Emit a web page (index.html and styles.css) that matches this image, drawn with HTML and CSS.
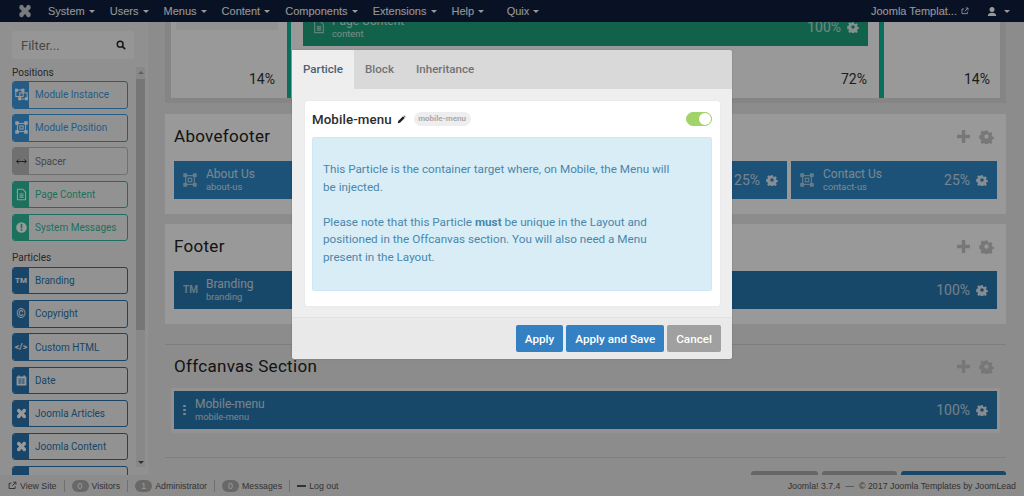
FILE: index.html
```html
<!DOCTYPE html>
<html lang="en">
<head>
    <meta charset="UTF-8">
    <title>Layout Manager</title>
    <link rel="stylesheet" href="styles.css">
</head>
<body>

    <!-- Top menu -->
    <nav class="navbar">
        <svg class="logo" viewBox="0 0 16 16"><use href="#joomla"/></svg>
        <ul class="nav-menu">
            <li>System <i class="caret"></i></li>
            <li>Users <i class="caret"></i></li>
            <li>Menus <i class="caret"></i></li>
            <li>Content <i class="caret"></i></li>
            <li>Components <i class="caret"></i></li>
            <li>Extensions <i class="caret"></i></li>
            <li>Help <i class="caret"></i></li>
            <li class="quix">Quix <i class="caret"></i></li>
        </ul>
        <div class="nav-right">
            <span>Joomla Templat...</span>
            <svg class="ext-icon" viewBox="0 0 12 12"><path d="M9.500 7v3h-8V3h3M7 1.500h3.500V5M10 2L5.500 6.500" fill="none" stroke="currentColor" stroke-width="1.300"/></svg>
            <svg class="user-icon" viewBox="0 0 12 12"><circle cx="6" cy="3.500" r="3" fill="currentColor"/><path d="M1 11.500c0-3 2-4 5-4s5 1 5 4z" fill="currentColor"/></svg>
            <i class="caret"></i>
        </div>
    </nav>

    <div class="page">
        <!-- Sidebar with particle picker -->
        <aside class="sidebar">
            <div class="filter">
                <span>Filter...</span>
                <svg viewBox="0 0 12 12"><circle cx="5" cy="5" r="3.500" fill="none" stroke="#222" stroke-width="1.700"/><path d="M7.500 7.500l3.500 3.500" stroke="#222" stroke-width="2"/></svg>
            </div>
            <div class="picker">
                <div class="picker-list">
                    <h4>Positions</h4>
                    <div class="pick blue"><b><svg viewBox="0 0 16 16"><use href="#instance"/></svg></b><span>Module Instance</span></div>
                    <div class="pick blue"><b><svg viewBox="0 0 16 16"><use href="#module"/></svg></b><span>Module Position</span></div>
                    <div class="pick grey"><b class="arrow"><svg viewBox="0 0 16 16"><path d="M2 8h12M4.500 5.500L2 8l2.500 2.500M11.500 5.500L14 8l-2.500 2.500" fill="none" stroke="currentColor" stroke-width="1.200"/></svg></b><span>Spacer</span></div>
                    <div class="pick green"><b><svg viewBox="0 0 16 16"><use href="#page"/></svg></b><span>Page Content</span></div>
                    <div class="pick green"><b><svg viewBox="0 0 16 16"><circle cx="8" cy="8" r="6.500" fill="#fff"/><rect x="7" y="3.500" width="2" height="5.500" fill="#2ebd9b"/><rect x="7" y="10" width="2" height="2" fill="#2ebd9b"/></svg></b><span>System Messages</span></div>
                    <h4 class="particles">Particles</h4>
                    <div class="pick navy"><b class="tm">TM</b><span>Branding</span></div>
                    <div class="pick navy"><b class="copy">&copy;</b><span>Copyright</span></div>
                    <div class="pick navy"><b class="code">&lt;/&gt;</b><span>Custom HTML</span></div>
                    <div class="pick navy"><b><svg viewBox="0 0 16 16"><path d="M2 3h12v11H2z" fill="#fff"/><path d="M4 1.500h1.500V4H4zM10.500 1.500H12V4h-1.500z" fill="#fff"/><path d="M3.500 6h9M3.500 8.500h9M3.500 11h9M6 6v6.500M10 6v6.500" stroke="#2874ae" stroke-width=".8"/></svg></b><span>Date</span></div>
                    <div class="pick navy"><b class="jm"><svg viewBox="0 0 16 16"><use href="#joomla"/></svg></b><span>Joomla Articles</span></div>
                    <div class="pick navy"><b class="jm"><svg viewBox="0 0 16 16"><use href="#joomla"/></svg></b><span>Joomla Content</span></div>
                    <div class="pick navy"><b></b><span></span></div>
                </div>
                <div class="scrollbar">
                    <i class="up"></i>
                    <div class="thumb"></div>
                    <i class="down"></i>
                </div>
            </div>
        </aside>

        <main class="content">
            <!-- Mainbody row, scrolled under the menu -->
            <section class="main-row">
                <div class="col side-col">
                    <div class="ghost"></div>
                    <span class="size">14%</span>
                </div>
                <div class="col mid-col">
                    <div class="block green-block">
                        <svg class="block-icon" viewBox="0 0 16 16"><use href="#page"/></svg>
                        <div class="block-name"><strong>Page Content</strong><small>content</small></div>
                        <em>100%</em>
                        <svg class="gear" viewBox="0 0 16 16"><use href="#gear"/></svg>
                    </div>
                    <span class="size">72%</span>
                </div>
                <div class="col side-col last-col">
                    <span class="size">14%</span>
                </div>
            </section>

            <section class="section">
                <header class="section-head">
                    <h2>Abovefooter</h2>
                    <div class="tools"><svg class="plus" viewBox="0 0 13 13"><use href="#plus"/></svg><svg class="gear" viewBox="0 0 16 16"><use href="#gear"/></svg></div>
                </header>
                <div class="row">
                    <div class="block quarter">
                        <svg class="block-icon" viewBox="0 0 16 16"><use href="#module"/></svg>
                        <div class="block-name"><strong>About Us</strong><small>about-us</small></div>
                        <em>25%</em>
                        <svg class="gear" viewBox="0 0 16 16"><use href="#gear"/></svg>
                    </div>
                    <div class="block quarter"><em>25%</em></div>
                    <div class="block quarter">
                        <em>25%</em>
                        <svg class="gear" viewBox="0 0 16 16"><use href="#gear"/></svg>
                    </div>
                    <div class="block quarter contact">
                        <svg class="block-icon" viewBox="0 0 16 16"><use href="#module"/></svg>
                        <div class="block-name"><strong>Contact Us</strong><small>contact-us</small></div>
                        <em>25%</em>
                        <svg class="gear" viewBox="0 0 16 16"><use href="#gear"/></svg>
                    </div>
                </div>
            </section>

            <section class="section">
                <header class="section-head">
                    <h2>Footer</h2>
                    <div class="tools"><svg class="plus" viewBox="0 0 13 13"><use href="#plus"/></svg><svg class="gear" viewBox="0 0 16 16"><use href="#gear"/></svg></div>
                </header>
                <div class="row">
                    <div class="block dark">
                        <span class="block-icon tm-icon">TM</span>
                        <div class="block-name"><strong>Branding</strong><small>branding</small></div>
                        <em>100%</em>
                        <svg class="gear" viewBox="0 0 16 16"><use href="#gear"/></svg>
                    </div>
                </div>
            </section>

            <section class="offcanvas">
                <header class="section-head">
                    <h2>Offcanvas Section</h2>
                    <div class="tools"><svg class="plus" viewBox="0 0 13 13"><use href="#plus"/></svg><svg class="gear" viewBox="0 0 16 16"><use href="#gear"/></svg></div>
                </header>
                <div class="row framed">
                    <div class="block dark">
                        <span class="dots"><i></i><i></i><i></i></span>
                        <div class="block-name"><strong>Mobile-menu</strong><small>mobile-menu</small></div>
                        <em>100%</em>
                        <svg class="gear" viewBox="0 0 16 16"><use href="#gear"/></svg>
                    </div>
                </div>
            </section>

            <div class="page-actions">
                <span class="dark-grey wide1"></span>
                <span class="dark-grey wide2"></span>
                <span class="action-blue"></span>
            </div>
        </main>
    </div>

    <!-- Status bar -->
    <footer class="status">
        <div class="status-left">
            <span class="item">
                <svg viewBox="0 0 12 12"><path d="M9.500 7v3h-8V3h3M7 1.500h3.500V5M10 2L5.500 6.500" fill="none" stroke="currentColor" stroke-width="1.300"/></svg>
                View Site
            </span>
            <span class="item"><i class="badge">0</i> Visitors</span>
            <span class="item"><i class="badge">1</i> Administrator</span>
            <span class="item"><i class="badge">0</i> Messages</span>
            <span class="item last"><i class="minus"></i> Log out</span>
        </div>
        <div class="status-right">Joomla! 3.7.4 &nbsp;&mdash;&nbsp; &copy; 2017 Joomla Templates by JoomLead</div>
    </footer>

    <div class="overlay"></div>

    <!-- Particle settings modal -->
    <div class="modal">
        <ul class="tabs">
            <li class="active">Particle</li>
            <li>Block</li>
            <li>Inheritance</li>
        </ul>
        <div class="modal-body">
            <div class="card">
                <div class="card-title">
                    <h3>Mobile-menu</h3>
                    <svg class="pencil" viewBox="0 0 12 12"><path d="M1 11l.7-3L8 1.700 10.300 4 4 10.300zM8.800 1l.7-.5 2 2-.5.700z" fill="#222"/></svg>
                    <span class="pill">mobile-menu</span>
                    <span class="toggle"><i></i></span>
                </div>
                <div class="info">
                    <p>This Particle is the container target where, on Mobile, the Menu will be injected.</p>
                    <p>Please note that this Particle <b>must</b> be unique in the Layout and positioned in the Offcanvas section. You will also need a Menu present in the Layout.</p>
                </div>
            </div>
        </div>
        <div class="modal-foot">
            <button class="btn primary">Apply</button>
            <button class="btn primary">Apply and Save</button>
            <button class="btn cancel">Cancel</button>
        </div>
    </div>

    <!-- Shared icons -->
    <svg class="defs" width="0" height="0">
        <defs>
            <g id="module" fill="none" stroke="currentColor" stroke-width="1.300">
                <rect x="3" y="3" width="10" height="10"/>
                <rect x="6" y="6" width="4" height="4"/>
                <rect x="1" y="1" width="3" height="3" fill="currentColor"/>
                <rect x="12" y="1" width="3" height="3" fill="currentColor"/>
                <rect x="1" y="12" width="3" height="3" fill="currentColor"/>
                <rect x="12" y="12" width="3" height="3" fill="currentColor"/>
            </g>
            <g id="instance" fill="none" stroke="currentColor" stroke-width="1.300">
                <rect x="1" y="2.500" width="9" height="8"/>
                <rect x="6" y="6" width="9" height="7.500"/>
                <rect x=".5" y="1.500" width="2.500" height="2.500" fill="currentColor"/>
                <rect x="8.500" y="1.500" width="2.500" height="2.500" fill="currentColor"/>
                <rect x="13" y="12" width="2.500" height="2.500" fill="currentColor"/>
                <rect x="4.500" y="12" width="2.500" height="2.500" fill="currentColor"/>
            </g>
            <g id="page" fill="none" stroke="currentColor" stroke-width="1.300">
                <path d="M3 1.500h6.500l3.500 3.500v9.500H3z"/>
                <path d="M5.500 7.500h5M5.500 9.500h5M5.500 11.500h5"/>
            </g>
            <path id="plus" fill="currentColor" d="M4.800 0h3.400v4.800H13v3.400H8.200V13H4.800V8.200H0V4.800h4.800z"/>
            <path id="joomla" fill="currentColor" d="M1.500 4a2.500 2.500 0 0 1 5-1L8 4.500 9.500 3a2.500 2.500 0 0 1 5 1 2.500 2.500 0 0 1-1.500 2.500L11.500 8l1.500 1.500a2.500 2.500 0 0 1 1.500 2.500 2.500 2.500 0 0 1-5 1L8 11.500 6.500 13a2.500 2.500 0 0 1-5-1A2.500 2.500 0 0 1 3 9.500L4.500 8 3 6.500A2.500 2.500 0 0 1 1.500 4z"/>
            <path id="gear" fill="currentColor" fill-rule="evenodd" d="M6.600 1h2.800l.4 2 1.500.7 1.800-1.100 2 2-1.100 1.800.6 1.500 2 .4v2.800l-2 .4-.6 1.500 1.100 1.800-2 2-1.800-1.100-1.500.6-.4 2H6.600l-.4-2-1.500-.6-1.800 1.100-2-2 1.100-1.800-.6-1.500-2-.4V6.600l2-.4.600-1.500L.9 2.900l2-2 1.800 1.100 1.500-.7zM8 5.400a2.600 2.600 0 1 0 0 5.200 2.600 2.600 0 0 0 0-5.200z" transform="translate(.8 .8) scale(.9)"/>
        </defs>
    </svg>

</body>
</html>
```

FILE: styles.css
```css
/* Global Styles */
* {
    margin: 0;
    padding: 0;
    box-sizing: border-box;
}

body {
    font-family: 'Roboto', sans-serif;
    height: 496px;
    overflow: hidden;
    display: flex;
    flex-direction: column;
    background-color: #e9e9e9;
    color: #333;
    position: relative;
}

ul {
    list-style: none;
}

.defs {
    position: absolute;
}

.caret {
    display: inline-block;
    width: 0;
    height: 0;
    margin-left: 1px;
    vertical-align: 2px;
    border-left: 3.5px solid transparent;
    border-right: 3.5px solid transparent;
    border-top: 3.5px solid currentColor;
}

/* Navbar */
.navbar {
    height: 22px;
    flex-shrink: 0;
    display: flex;
    align-items: center;
    padding-left: 18px;
    background-color: #0f1f3e;
    color: #ffffff;
    font-family: 'Liberation Sans', sans-serif;
    font-size: 11px;
}

.logo {
    width: 14px;
    height: 14px;
    color: #c8ccd4;
}

.nav-menu {
    display: flex;
    gap: 15px;
    margin-left: 16px;
}

.nav-menu .quix {
    margin-left: 7.500px;
}

.nav-right {
    margin-left: auto;
    display: flex;
    align-items: center;
    padding-right: 14px;
}

.nav-right .caret {
    margin-left: 7px;
    vertical-align: 0;
}

.ext-icon {
    width: 8px;
    height: 8px;
    margin-left: 4px;
}

.user-icon {
    width: 10px;
    height: 11px;
    margin-left: 18px;
}

/* Page */
.page {
    flex: 1;
    display: flex;
    min-height: 0;
}

.sidebar {
    width: 148px;
    flex-shrink: 0;
    padding: 9px 0 0 12px;
    border-right: 1px solid #f4f4f4;
    background-color: #f0f0f0;
    display: flex;
    flex-direction: column;
    overflow: hidden;
}

.filter {
    width: 122px;
    height: 28px;
    flex-shrink: 0;
    display: flex;
    align-items: center;
    justify-content: space-between;
    padding: 0 8px 0 9px;
    background-color: #fafafa;
    border-radius: 3px;
    color: #777;
    font-size: 13px;
}

.filter svg {
    width: 10px;
    height: 10px;
}

.picker {
    display: flex;
    flex: 1;
    min-height: 0;
    margin-top: 7.500px;
}

.picker-list {
    width: 116px;
    flex-shrink: 0;
    overflow: hidden;
    height: 410px;
}

.picker-list h4 {
    font-size: 10px;
    font-weight: 400;
    color: #444;
    line-height: 12px;
    margin-bottom: 2.500px;
}

.picker-list h4.particles {
    margin-top: 10.700px;
    margin-bottom: 3px;
}

.pick {
    display: flex;
    height: 27.500px;
    margin-bottom: 5.700px;
    border: 1.500px solid;
    border-radius: 3px;
    background-color: #f4f4f4;
    font-size: 10px;
    align-items: stretch;
    overflow: hidden;
}

.pick b {
    width: 16px;
    flex-shrink: 0;
    display: flex;
    align-items: center;
    justify-content: center;
    color: #fff;
    font-weight: 700;
    font-size: 8px;
}

.pick b svg {
    width: 13px;
    height: 13px;
}

.pick b.jm svg {
    width: 11px;
    height: 11px;
}

.pick span {
    padding-left: 6px;
    align-self: center;
}

.pick b.arrow {
    color: #333;
}

.pick b.copy {
    font-size: 12px;
}

.pick b.code {
    font-size: 9px;
}

.pick.blue {
    border-color: #3c9ae0;
    color: #3c9ae0;
}

.pick.blue b {
    background-color: #3c9ae0;
}

.pick.grey {
    border-color: #bbb;
    color: #777;
}

.pick.grey b {
    background-color: #bbb;
}

.pick.green {
    border-color: #2ebd9b;
    color: #2ebd9b;
}

.pick.green b {
    background-color: #2ebd9b;
}

.pick.navy {
    border-color: #2874ae;
    color: #2874ae;
}

.pick.navy b {
    background-color: #2874ae;
}

.scrollbar {
    width: 9px;
    height: 400px;
    margin-left: 8px;
    background-color: #e3e3e3;
    display: flex;
    flex-direction: column;
    align-items: center;
}

.scrollbar .up {
    width: 0;
    height: 0;
    margin: 4px 0 5px;
    border-left: 3px solid transparent;
    border-right: 3px solid transparent;
    border-bottom: 3px solid #a0a0a0;
}

.scrollbar .thumb {
    width: 9px;
    height: 251px;
    background-color: #c5c5c5;
}

.scrollbar .down {
    width: 0;
    height: 0;
    margin-top: auto;
    margin-bottom: 3px;
    border-left: 3px solid transparent;
    border-right: 3px solid transparent;
    border-top: 3px solid #505050;
}

/* Main content */
.content {
    flex: 1;
    min-width: 0;
    padding: 0 18px 0 17px;
    overflow: hidden;
}

.section {
    background-color: #fff;
    padding: 0 9px 15px;
    margin-bottom: 10.500px;
}

.main-row {
    height: 81px;
    padding: 0 6px 5px;
    display: flex;
    background-color: #dedede;
    margin-bottom: 11px;
}

.col {
    position: relative;
    background-color: #fff;
}

.side-col {
    width: 116px;
    flex-shrink: 0;
    padding: 0 5px;
}

.last-col {
    flex: 1;
    border-left: 5px solid #12b89c;
}

.ghost {
    height: 8px;
    background-color: #f4f4f4;
    margin-right: 4px;
}

.mid-col {
    flex: 0 0 592px;
    padding: 0 11px 0 12px;
    border-left: 4px solid #12b89c;
}

.size {
    position: absolute;
    right: 12px;
    bottom: 11px;
    font-size: 14px;
    color: #333;
}

.last-col .size {
    right: 10px;
}

.section-head {
    display: flex;
    align-items: center;
    justify-content: space-between;
    height: 46.500px;
    padding: 0 3px 2px 0;
}

.section-head h2 {
    font-size: 17px;
    font-weight: 400;
    color: #222;
    letter-spacing: .3px;
}

.tools {
    display: flex;
    align-items: center;
    gap: 9px;
    color: #c6c6c6;
}

.tools .plus {
    width: 13px;
    height: 13px;
}

.tools .gear {
    width: 15px;
    height: 15px;
}

.row {
    display: flex;
    gap: 4px;
}

.row.framed {
    padding: 3.500px 3px;
    margin: 0 -3px;
    background-color: #f4f4f4;
}

.block {
    flex: 1;
    min-width: 0;
    height: 38px;
    display: flex;
    align-items: center;
    padding: 0 9px;
    color: #fff;
}

.block.quarter {
    background-color: #3089c6;
}

.block.contact {
    flex: 0 0 206px;
}

.block.dark {
    background-color: #2878b0;
}

.green-block {
    margin-top: -14px;
    background-color: #1fa37e;
}

.block-icon {
    width: 14px;
    height: 14px;
    flex-shrink: 0;
    opacity: .6;
    margin-right: 9px;
}

.green-block .block-icon {
    margin-right: 6px;
}

.tm-icon {
    font-size: 10px;
    font-weight: 700;
    white-space: nowrap;
    display: inline-flex;
    align-items: center;
}

.dots {
    width: 3px;
    margin-right: 9px;
    display: flex;
    flex-direction: column;
    gap: 1.500px;
}

.dots i {
    width: 2.500px;
    height: 2.500px;
    border-radius: 50%;
    background-color: #fff;
    opacity: .8;
}

.block-name {
    display: flex;
    flex-direction: column;
    padding-top: 1px;
    color: #fff;
    opacity: .75;
    flex: 1;
    min-width: 0;
}

.block-name strong {
    font-weight: 400;
    font-size: 12px;
    line-height: 12px;
}

.block-name small {
    font-size: 9.300px;
    line-height: 13px;
}

.block em {
    font-style: normal;
    font-size: 14px;
    opacity: .7;
    margin-left: auto;
}

.block .gear {
    width: 12px;
    height: 12px;
    margin-left: 6px;
    color: #fff;
    opacity: .85;
}

.offcanvas {
    padding: 0 9px;
    border-top: 1px solid #d2d2d2;
    border-bottom: 1px solid #d2d2d2;
    height: 114px;
    margin-top: 20px;
}

.offcanvas .section-head {
    height: 43px;
    padding-bottom: 0;
}

.page-actions {
    display: flex;
    justify-content: flex-end;
    gap: 4px;
    margin-top: 13px;
}

.page-actions span {
    height: 20px;
    border-radius: 3px 3px 0 0;
}

.dark-grey {
    background-color: #aaa;
}

.wide1 {
    width: 67px;
}

.wide2 {
    width: 75px;
}

.action-blue {
    width: 105px;
    background-color: #2878b0;
}

/* Status bar */
.status {
    position: absolute;
    left: 0;
    right: 0;
    bottom: 0;
    height: 21px;
    display: flex;
    align-items: center;
    justify-content: space-between;
    padding: 0 8px 0 8px;
    background-color: #e9e9e9;
    font-family: 'Liberation Sans', sans-serif;
    font-size: 8.800px;
    color: #555;
}

.status-left {
    display: flex;
    align-items: center;
}

.item {
    display: flex;
    align-items: center;
    gap: 3px;
    height: 12px;
    padding-right: 7px;
    margin-right: 7px;
    border-right: 1px solid #bbb;
}

.item.last {
    border-right: none;
}

.item svg {
    width: 9px;
    height: 9px;
    margin-right: 0;
}

.badge {
    font-style: normal;
    min-width: 17px;
    height: 12px;
    line-height: 12px;
    text-align: center;
    border-radius: 6px;
    background-color: #aeaeae;
    color: #fff;
}

.minus {
    width: 9px;
    height: 2px;
    background-color: #555;
}

/* Dim layer and modal */
.overlay {
    position: absolute;
    inset: 0;
    background-color: rgba(0, 0, 0, 0.4);
}

.modal {
    position: absolute;
    left: 292px;
    top: 50px;
    width: 440px;
    height: 309px;
    background-color: #eee;
    border-radius: 3px;
    display: flex;
    flex-direction: column;
    box-shadow: 0 0 2px rgba(0, 0, 0, 0.2);
}

.tabs {
    display: flex;
    height: 39px;
    flex-shrink: 0;
    background-color: #d9d9d9;
    font-size: 11.600px;
    font-weight: 500;
    color: #737373;
    border-radius: 3px 3px 0 0;
}

.tabs li {
    padding: 0 11px;
    line-height: 39px;
}

.tabs li.active {
    background-color: #eee;
    color: #4a6274;
}

.modal-body {
    flex: 1;
    padding: 12px 12px 11px 13px;
}

.card {
    height: 205px;
    padding: 0 8px 0 7px;
    background-color: #fff;
    border-radius: 2px;
    box-shadow: 0 0 1px rgba(0, 0, 0, 0.15);
}

.card-title {
    display: flex;
    align-items: center;
    height: 36px;
}

.card-title h3 {
    font-size: 13.300px;
    font-weight: 500;
    color: #2c2c2c;
    letter-spacing: .1px;
}

.pencil {
    width: 9px;
    height: 9px;
    margin-left: 5px;
}

.pill {
    margin-left: 8px;
    padding: 0 4.500px;
    height: 14px;
    line-height: 14px;
    border-radius: 7px;
    background-color: #eee;
    font-size: 8px;
    font-weight: 700;
    color: #aaa;
}

.toggle {
    margin-left: auto;
    width: 26px;
    height: 14px;
    border-radius: 7px;
    background-color: #a0d468;
    border: 1px solid #a0d468;
    display: flex;
    justify-content: flex-end;
}

.toggle i {
    width: 12px;
    height: 12px;
    border-radius: 50%;
    background-color: #fff;
}

.info {
    height: 154px;
    padding: 23px 11px 0 10px;
    background-color: #d9edf7;
    border: 1px solid #cfe8f3;
    border-radius: 2px;
    font-size: 11.700px;
    line-height: 17.600px;
    color: #4a87aa;
}

.info p {
    margin-bottom: 17.500px;
    padding-right: 25px;
}

.info b {
    font-weight: 700;
}

.modal-foot {
    height: 42px;
    flex-shrink: 0;
    display: flex;
    justify-content: flex-end;
    align-items: center;
    gap: 3px;
    padding-right: 11px;
    background-color: #e9e9e9;
    border-top: 1px solid #e2e2e2;
    border-radius: 0 0 3px 3px;
}

.btn {
    height: 27px;
    padding: 0 9px;
    border: none;
    border-radius: 2px;
    font-family: 'Roboto', sans-serif;
    font-size: 11.700px;
    font-weight: 500;
    color: #fff;
}

.btn.primary {
    background-color: #3380c2;
}

.btn.cancel {
    background-color: #a0a0a0;
}
```
